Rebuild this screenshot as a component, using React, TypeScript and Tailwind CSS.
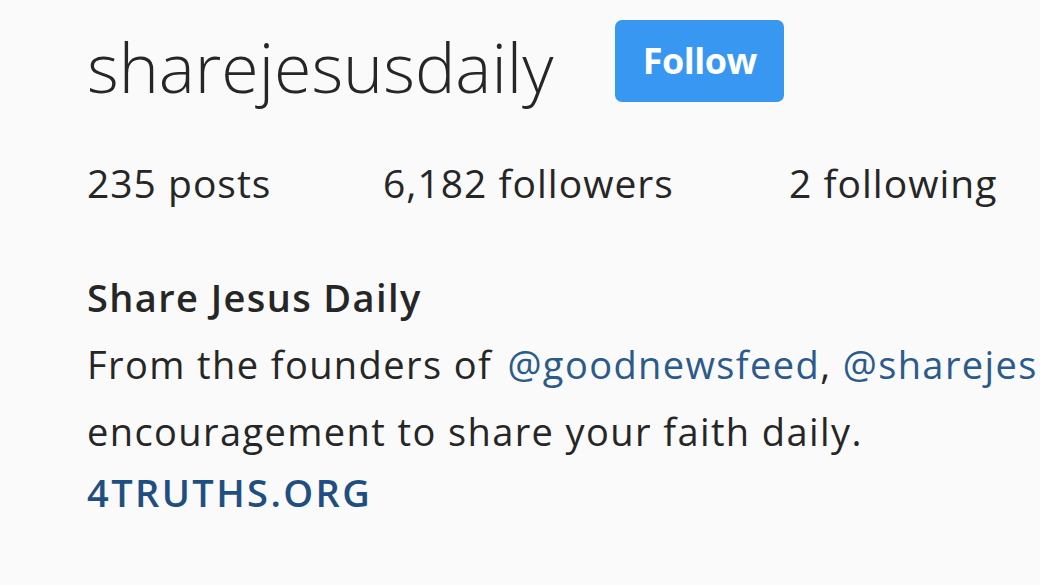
export default function App() {
  return (
    <div
      className="w-[1040px] h-[585px] overflow-hidden bg-[#fafafa] text-[#262626] pl-[87px]"
      style={{ fontFamily: '"Open Sans", "Noto Sans", sans-serif' }}
    >
      {/* username + follow */}
      <div className="flex items-start gap-[62px] pt-[20px]">
        <h1 className="text-[68px] font-light leading-none whitespace-nowrap mt-[13px]">
          sharejesusdaily
        </h1>
        <button className="h-[82px] w-[169px] rounded-[7px] bg-[#3897f0] text-white text-[36px] font-bold tracking-[-0.5px]">
          Follow
        </button>
      </div>

      {/* stats */}
      <ul className="flex mt-[59px] text-[39px] leading-[44px] tracking-[1px] whitespace-nowrap">
        <li className="w-[296px]">235 posts</li>
        <li className="w-[406px]">6,182 followers</li>
        <li>2 following</li>
      </ul>

      {/* bio */}
      <div className="mt-[59px] text-[38px] leading-[67px] tracking-[1.4px] whitespace-nowrap">
        <h2 className="font-semibold">Share Jesus Daily</h2>
        <p>
          From the founders of <a className="text-[#2b5a8c] ml-[4px]">@goodnewsfeed</a>,{" "}
          <a className="text-[#2b5a8c]">@sharejesusdaily</a> and
          <br />
          encouragement to share your faith daily.
        </p>
        <a className="block -mt-[6px] text-[#1f4f82] font-semibold tracking-[2.4px]">4TRUTHS.ORG</a>
      </div>
    </div>
  );
}
